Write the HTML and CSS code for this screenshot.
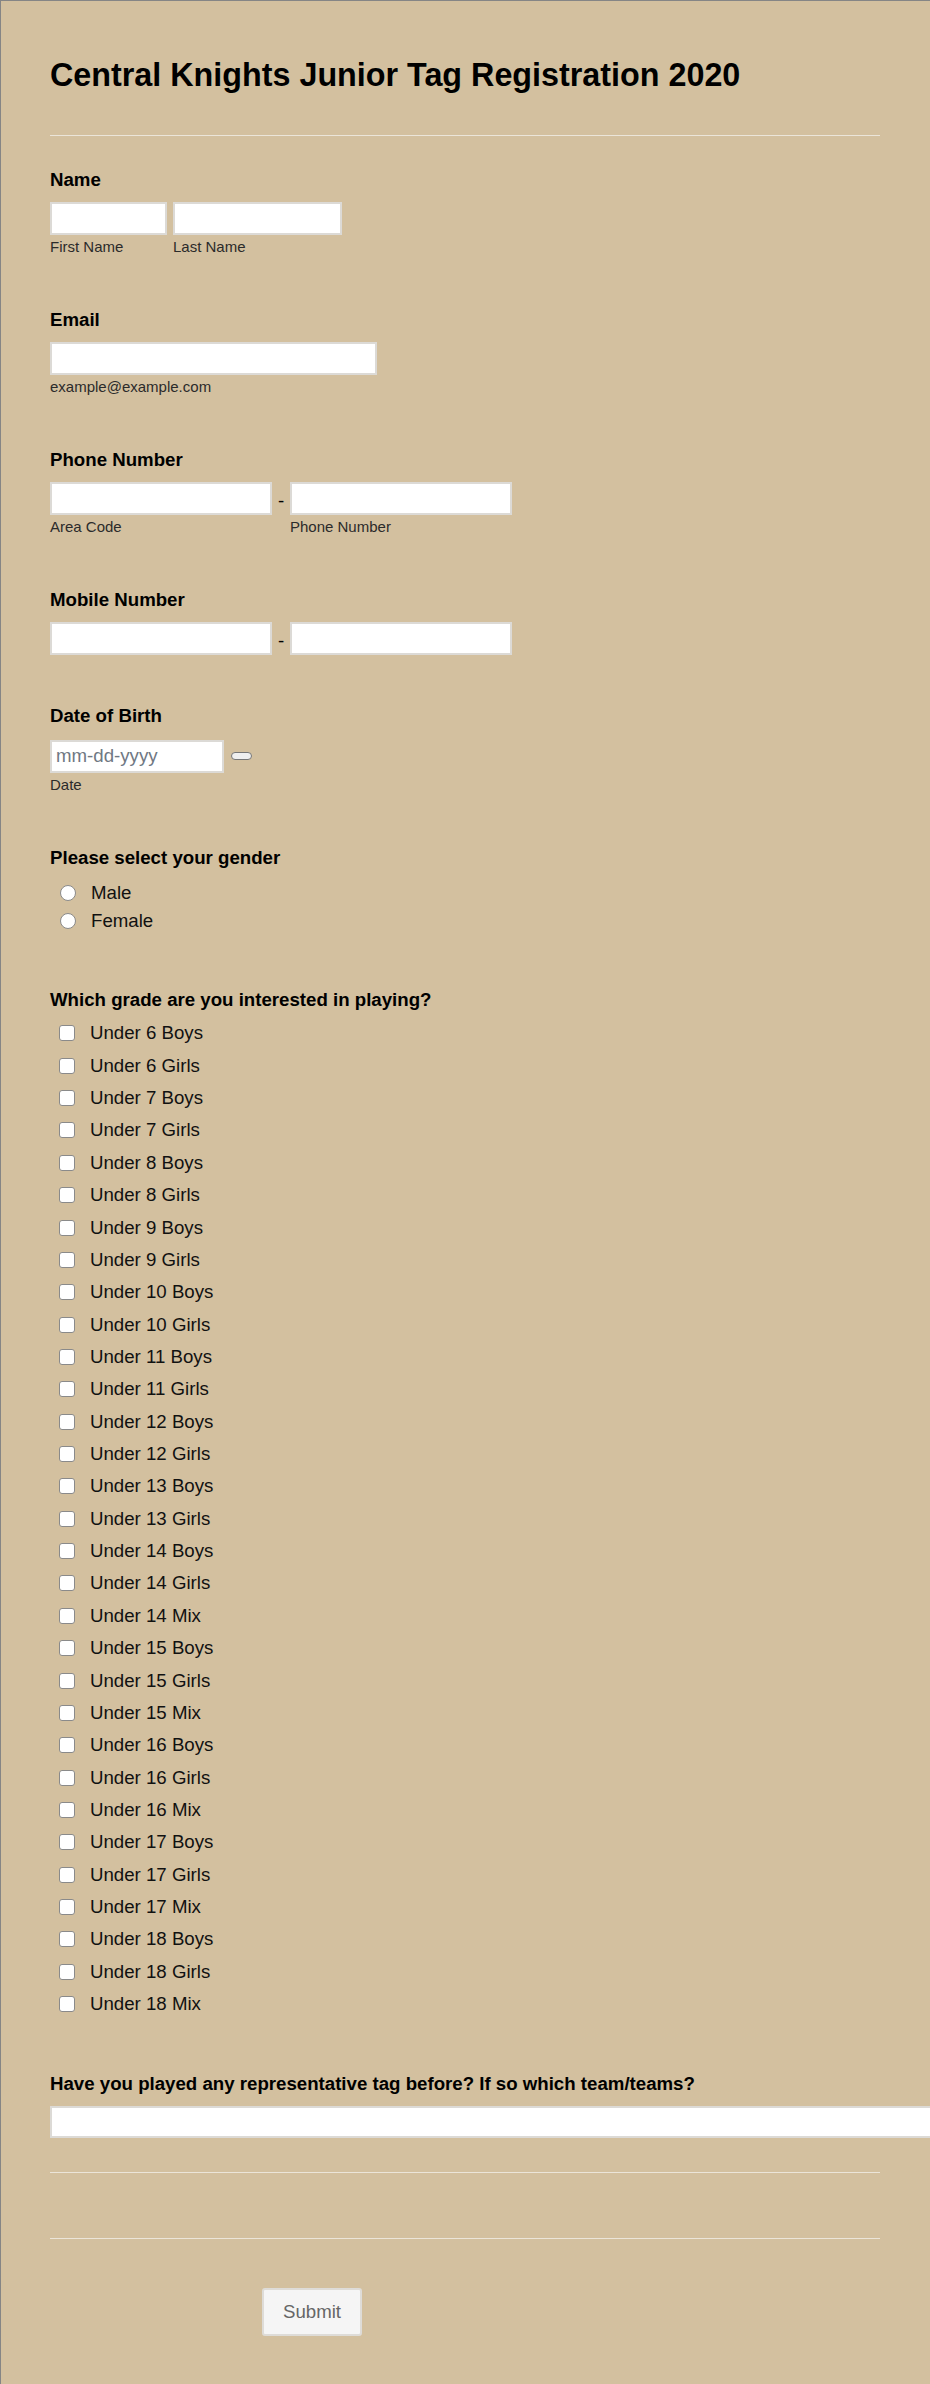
FILE: index.html
```html
<!DOCTYPE html>
<html lang="en">
<head>
    <meta charset="UTF-8">
    <meta name="viewport" content="width=device-width, initial-scale=1.0">
    <title>Central Knights Junior Tag Registration 2020</title>
    <link rel="stylesheet" href="styles.css">
</head>
<body>
<div class="page">
    <div class="header">
        <h1 class="title">Central Knights Junior Tag Registration 2020</h1>
    </div>

    <form class="form" onsubmit="return false">
        <div class="field field-first">
            <label class="field-label">Name</label>
            <div class="inputs">
                <div class="sub">
                    <input type="text" class="input input-first">
                    <span class="sublabel">First Name</span>
                </div>
                <div class="sub">
                    <input type="text" class="input input-last">
                    <span class="sublabel">Last Name</span>
                </div>
            </div>
        </div>

        <div class="field">
            <label class="field-label">Email</label>
            <div class="sub">
                <input type="email" class="input input-email">
                <span class="sublabel">example@example.com</span>
            </div>
        </div>

        <div class="field">
            <label class="field-label">Phone Number</label>
            <div class="inputs">
                <div class="sub">
                    <input type="tel" class="input input-phone">
                    <span class="sublabel">Area Code</span>
                </div>
                <span class="dash">-</span>
                <div class="sub">
                    <input type="tel" class="input input-phone">
                    <span class="sublabel">Phone Number</span>
                </div>
            </div>
        </div>

        <div class="field field-mobile">
            <label class="field-label">Mobile Number</label>
            <div class="inputs">
                <input type="tel" class="input input-phone">
                <span class="dash">-</span>
                <input type="tel" class="input input-phone">
            </div>
        </div>

        <div class="field">
            <label class="field-label field-label-date">Date of Birth</label>
            <div class="date-row">
                <input type="text" class="input input-date" placeholder="mm-dd-yyyy">
                <button type="button" class="date-btn"></button>
            </div>
            <span class="sublabel">Date</span>
        </div>

        <div class="field">
            <label class="field-label field-label-radios">Please select your gender</label>
            <div class="radios">
                <label class="option"><input type="radio" name="gender">Male</label>
                <label class="option"><input type="radio" name="gender">Female</label>
            </div>
        </div>

        <div class="field">
            <label class="field-label field-label-checks">Which grade are you interested in playing?</label>
            <div class="checks" id="grades"></div>
        </div>

        <div class="field field-last">
            <label class="field-label">Have you played any representative tag before? If so which team/teams?</label>
            <input type="text" class="input input-wide">
        </div>

        <div class="divider"></div>
        <div class="divider divider-second"></div>

        <button type="submit" class="submit">Submit</button>
    </form>
</div>

<script>
    const grades = [
        "Under 6 Boys", "Under 6 Girls", "Under 7 Boys", "Under 7 Girls",
        "Under 8 Boys", "Under 8 Girls", "Under 9 Boys", "Under 9 Girls",
        "Under 10 Boys", "Under 10 Girls", "Under 11 Boys", "Under 11 Girls",
        "Under 12 Boys", "Under 12 Girls", "Under 13 Boys", "Under 13 Girls",
        "Under 14 Boys", "Under 14 Girls", "Under 14 Mix",
        "Under 15 Boys", "Under 15 Girls", "Under 15 Mix",
        "Under 16 Boys", "Under 16 Girls", "Under 16 Mix",
        "Under 17 Boys", "Under 17 Girls", "Under 17 Mix",
        "Under 18 Boys", "Under 18 Girls", "Under 18 Mix"
    ];

    const list = document.getElementById("grades");
    grades.forEach(grade => {
        const row = document.createElement("label");
        row.className = "option option-check";
        const box = document.createElement("input");
        box.type = "checkbox";
        box.name = "grade";
        box.value = grade;
        row.appendChild(box);
        row.appendChild(document.createTextNode(grade));
        list.appendChild(row);
    });
</script>
</body>
</html>
```

FILE: styles.css
```css
html {
    background-color: #d3c09f;
}

body {
    margin: 0;
    padding: 0;
    font-family: "Liberation Sans", Arial, sans-serif;
    color: #000;
}

.page {
    min-height: 2383px;
    padding: 0 50px 0 49px;
    border-top: 1px solid #858585;
    border-left: 1px solid #858585;
    background-color: #d3c09f;
    overflow: hidden;
}

.header {
    padding-top: 55px;
    padding-bottom: 41px;
    border-bottom: 1px solid #ebe5d9;
}

.title {
    margin: 0;
    font-size: 32.3px;
    line-height: 38px;
    font-weight: bold;
    color: #000;
}

.form {
    margin: 0;
}

.field {
    margin-bottom: 52px;
}

.field-first {
    margin-top: 32px;
}

.field-mobile {
    margin-bottom: 47px;
}

.field-last {
    margin-bottom: 34px;
}

.field-label {
    display: block;
    font-size: 18.67px;
    line-height: 24px;
    font-weight: bold;
    margin-bottom: 10px;
}

.field-label-date { margin-bottom: 11.5px; }
.field-label-radios { margin-bottom: 9px; }
.field-label-checks { margin-bottom: 5.5px; }

.inputs {
    display: flex;
    align-items: flex-start;
}

.sub {
    display: flex;
    flex-direction: column;
}

.inputs .sub + .sub {
    margin-left: 6px;
}

.input {
    box-sizing: border-box;
    height: 33px;
    margin: 0;
    padding: 0 4px;
    border: 2px solid #dcdad6;
    border-radius: 0;
    background: #fff;
    font-family: "Liberation Sans", Arial, sans-serif;
    font-size: 18.67px;
    color: #333;
    outline: none;
}

.input-first { width: 117px; }
.input-last { width: 169px; }
.input-email { width: 327px; }
.input-phone { width: 222px; }
.input-date { width: 174px; }
.input-wide { width: 900px; height: 32px; display: block; }

.input-date::placeholder {
    color: #6f7883;
}

.sublabel {
    display: block;
    margin-top: 3px;
    font-size: 15px;
    line-height: 18px;
    color: #2b2b2b;
}

.dash {
    width: 18px;
    text-align: center;
    font-size: 18.67px;
    line-height: 33px;
    padding-top: 2px;
}

.date-row {
    display: flex;
    align-items: center;
}

.date-btn {
    width: 21px;
    height: 8px;
    margin-left: 7px;
    padding: 0;
    border: 1px solid #767676;
    border-radius: 4px;
    background-color: #efefef;
}

.option {
    display: flex;
    align-items: center;
    height: 28.6px;
    font-size: 18.67px;
    color: #111;
}

.option input {
    -webkit-appearance: none;
    appearance: none;
    box-sizing: border-box;
    flex: none;
    width: 16px;
    height: 16px;
    margin: 0 15px 0 10px;
    border: 1px solid #8a8a8a;
    background-color: #fff;
}

.option input[type="radio"] {
    border-radius: 50%;
}

.option-check {
    height: 32.37px;
}

.option-check input {
    margin: 0 15px 0 9px;
    border-radius: 3px;
}

.divider {
    border-top: 1px solid #ebe5d9;
}

.divider-second {
    margin-top: 65px;
}

.submit {
    display: block;
    box-sizing: border-box;
    width: 100px;
    height: 48px;
    margin: 49px 0 0 212px;
    border: 2px solid #dedcd8;
    border-radius: 3px;
    background-color: #f5f5f5;
    font-family: "Liberation Sans", Arial, sans-serif;
    font-size: 18.67px;
    color: #666;
    cursor: pointer;
}
```
